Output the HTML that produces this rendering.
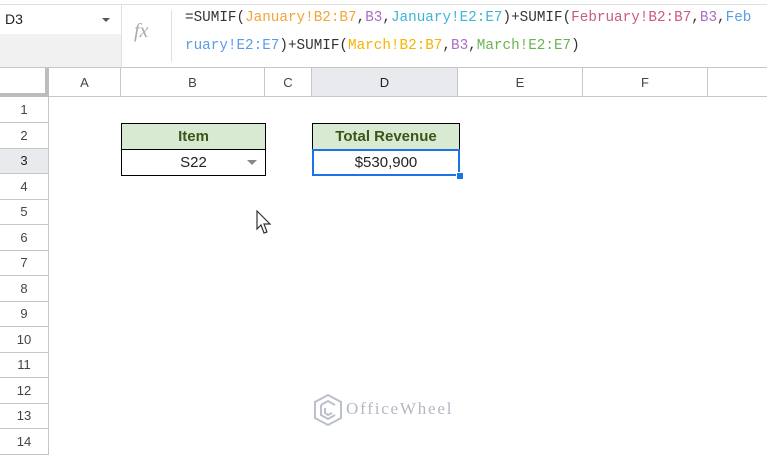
<!DOCTYPE html>
<html><head><style>
body{margin:0;width:767px;height:448px;overflow:hidden;background:#fff;font-family:"Liberation Sans",Arial,sans-serif;position:relative}
.a{position:absolute}
.f{font-family:"Liberation Mono",monospace;font-size:14.3px;color:#333;white-space:pre;letter-spacing:0}
.hdr{position:absolute;top:68px;height:29px;border-right:1px solid #c6c6c6;border-bottom:1px solid #c6c6c6;box-sizing:border-box;text-align:center;line-height:29px;font-size:13px;color:#444;background:#fff}
.rh{position:absolute;left:0;width:49px;border-right:1px solid #c6c6c6;border-bottom:1px solid #c6c6c6;box-sizing:border-box;text-align:center;font-size:13px;color:#444;background:#fff}
</style></head><body>
<div class="a" style="left:0;top:4px;width:767px;height:1px;background:#e0e0e0"></div>
<div class="a" style="left:0;top:34px;width:121px;height:34px;background:#f1f1f1"></div>
<div class="a" style="left:5px;top:11px;font-size:14px;color:#222">D3</div>
<div class="a" style="left:102px;top:18px;width:0;height:0;border-left:4px solid transparent;border-right:4px solid transparent;border-top:4px solid #555"></div>
<div class="a" style="left:121px;top:5px;width:1px;height:63px;background:#e0e0e0"></div>
<div class="a" style="left:171px;top:10px;width:1px;height:52px;background:#e0e0e0"></div>
<div class="a" style="left:134px;top:20px;font-family:'Liberation Serif',serif;font-style:italic;font-size:20px;color:#aaa">fx</div>
<div class="a f" style="left:185px;top:10px">=SUMIF(<span style="color:#f4a436">January!B2:B7</span>,<span style="color:#a86fc4">B3</span>,<span style="color:#3fb3d8">January!E2:E7</span>)+SUMIF(<span style="color:#c75b80">February!B2:B7</span>,<span style="color:#a86fc4">B3</span>,<span style="color:#5b9ce8">Feb</span></div>
<div class="a f" style="left:185px;top:38px"><span style="color:#5b9ce8">ruary!E2:E7</span>)+SUMIF(<span style="color:#f5b400">March!B2:B7</span>,<span style="color:#a86fc4">B3</span>,<span style="color:#6ab450">March!E2:E7</span>)</div>
<div class="a" style="left:0;top:67px;width:767px;height:1px;background:#c6c6c6"></div>

<div class="hdr" style="left:0;width:49px;border-right:4px solid #bdbdbd;border-bottom:4px solid #bdbdbd;height:29px"></div>
<div class="hdr" style="left:49px;width:72px">A</div>
<div class="hdr" style="left:121px;width:144px">B</div>
<div class="hdr" style="left:265px;width:47px">C</div>
<div class="hdr" style="left:312px;width:146px;background:#e8eaed;color:#222">D</div>
<div class="hdr" style="left:458px;width:125px">E</div>
<div class="hdr" style="left:583px;width:125px">F</div>
<div class="hdr" style="left:708px;width:59px;border-right:none"></div>

<div class="rh" style="top:97px;height:26px;line-height:25px">1</div>
<div class="rh" style="top:123px;height:26px;line-height:25px">2</div>
<div class="rh" style="top:149px;height:25px;line-height:24px;background:#e8eaed;color:#222">3</div>
<div class="rh" style="top:174px;height:26px;line-height:25px">4</div>
<div class="rh" style="top:200px;height:25px;line-height:24px">5</div>
<div class="rh" style="top:225px;height:26px;line-height:25px">6</div>
<div class="rh" style="top:251px;height:25px;line-height:24px">7</div>
<div class="rh" style="top:276px;height:26px;line-height:25px">8</div>
<div class="rh" style="top:302px;height:25px;line-height:24px">9</div>
<div class="rh" style="top:327px;height:26px;line-height:25px">10</div>
<div class="rh" style="top:353px;height:25px;line-height:24px">11</div>
<div class="rh" style="top:378px;height:26px;line-height:25px">12</div>
<div class="rh" style="top:404px;height:25px;line-height:24px">13</div>
<div class="rh" style="top:429px;height:26px;line-height:25px">14</div>

<div class="a" style="left:121px;top:123px;width:145px;height:53px;border:1px solid #000;box-sizing:border-box"></div>
<div class="a" style="left:122px;top:124px;width:143px;height:25px;background:#d9ead3;border-bottom:1px solid #000;text-align:center;line-height:25px;font-size:15px;font-weight:bold;color:#38571a">Item</div>
<div class="a" style="left:122px;top:150px;width:143px;height:25px;text-align:center;line-height:25px;font-size:15px;color:#222">S22</div>
<div class="a" style="left:247px;top:160px;width:0;height:0;border-left:5px solid transparent;border-right:5px solid transparent;border-top:5px solid #888"></div>

<div class="a" style="left:312px;top:123px;width:148px;height:53px;border:1px solid #000;box-sizing:border-box"></div>
<div class="a" style="left:313px;top:124px;width:146px;height:25px;background:#d9ead3;border-bottom:1px solid #000;text-align:center;line-height:25px;font-size:15px;font-weight:bold;color:#38571a">Total Revenue</div>
<div class="a" style="left:312px;top:149px;width:148px;height:27px;border:2px solid #1a73e8;box-sizing:border-box;background:#fff;text-align:center;line-height:23px;font-size:15px;color:#222">$530,900</div>
<div class="a" style="left:456px;top:172px;width:6px;height:6px;background:#1a73e8;border:1px solid #fff"></div>

<svg class="a" style="left:255px;top:210px" width="18" height="26" viewBox="0 0 18 26"><path d="M2 1 L2 19 L6 15 L9 23 L12 22 L9 14 L15 14 Z" fill="#fff" stroke="#333" stroke-width="1.2"/></svg>

<svg class="a" style="left:312px;top:393px" width="32" height="34" viewBox="0 0 32 34"><path d="M16 2 L29 9 L29 25 L16 32 L3 25 L3 9 Z M9 12 L16 8 L23 12 M9 12 L9 22 L16 26 L23 22 M13 15 L13 20 L16 22 L20 20" fill="none" stroke="#bcc0cc" stroke-width="2"/></svg>
<div class="a" style="left:346px;top:399px;font-family:'Liberation Serif',serif;font-size:17px;letter-spacing:1.8px;color:#b3b7c2">OfficeWheel</div>
</body></html>
